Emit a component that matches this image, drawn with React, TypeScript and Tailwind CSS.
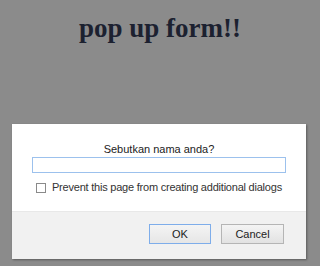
import { useState } from 'react';

function App() {
  const [name, setName] = useState('');
  const [prevent, setPrevent] = useState(false);

  return (
    <div className="relative h-[266px] w-[320px] overflow-hidden bg-[#8b8b8b]">
      <h1 className="pt-[12px] text-center font-['Liberation_Serif',serif] text-[27px] font-bold leading-[32px] text-[#1c2130]">
        pop up form!!
      </h1>

      <div className="absolute left-[12px] top-[124px] flex h-[135px] w-[294px] flex-col bg-white shadow-[1px_1px_2px_rgba(0,0,0,0.35)] font-['Liberation_Sans',Arial,sans-serif] text-[11px] text-[#222]">
        <div className="flex h-[87px] flex-col px-[20px]">
          <p className="mt-[19px] text-center leading-[13px]">Sebutkan nama anda?</p>
          <input
            value={name}
            onChange={(e) => setName(e.target.value)}
            className="mt-[1px] h-[16px] w-[254px] border border-[#9cc1ed] bg-white px-1 text-[11px] outline-none"
          />
          <label className="mt-[8px] flex items-center gap-[6px] pl-[4px] leading-[13px]">
            <span
              onClick={() => setPrevent(!prevent)}
              className="h-[10px] w-[10px] shrink-0 border border-[#8a8a8a] bg-white"
            />
            <span className="whitespace-nowrap tracking-[-0.22px] text-[#333]">
              Prevent this page from creating additional dialogs
            </span>
          </label>
        </div>
        <div className="flex flex-1 items-start justify-end gap-[10px] border-t border-[#e8e8e8] bg-[#f1f1f1] pr-[22px] pt-[12px]">
          <button className="h-[20px] w-[62px] border border-[#7eadea] bg-gradient-to-b from-[#f4f4f4] to-[#e6e6e6] text-[11px] text-[#222]">
            OK
          </button>
          <button className="h-[20px] w-[63px] border border-[#b5b5b5] bg-gradient-to-b from-[#f4f4f4] to-[#e2e2e2] text-[11px] text-[#222]">
            Cancel
          </button>
        </div>
      </div>
    </div>
  );
}

export default App;
